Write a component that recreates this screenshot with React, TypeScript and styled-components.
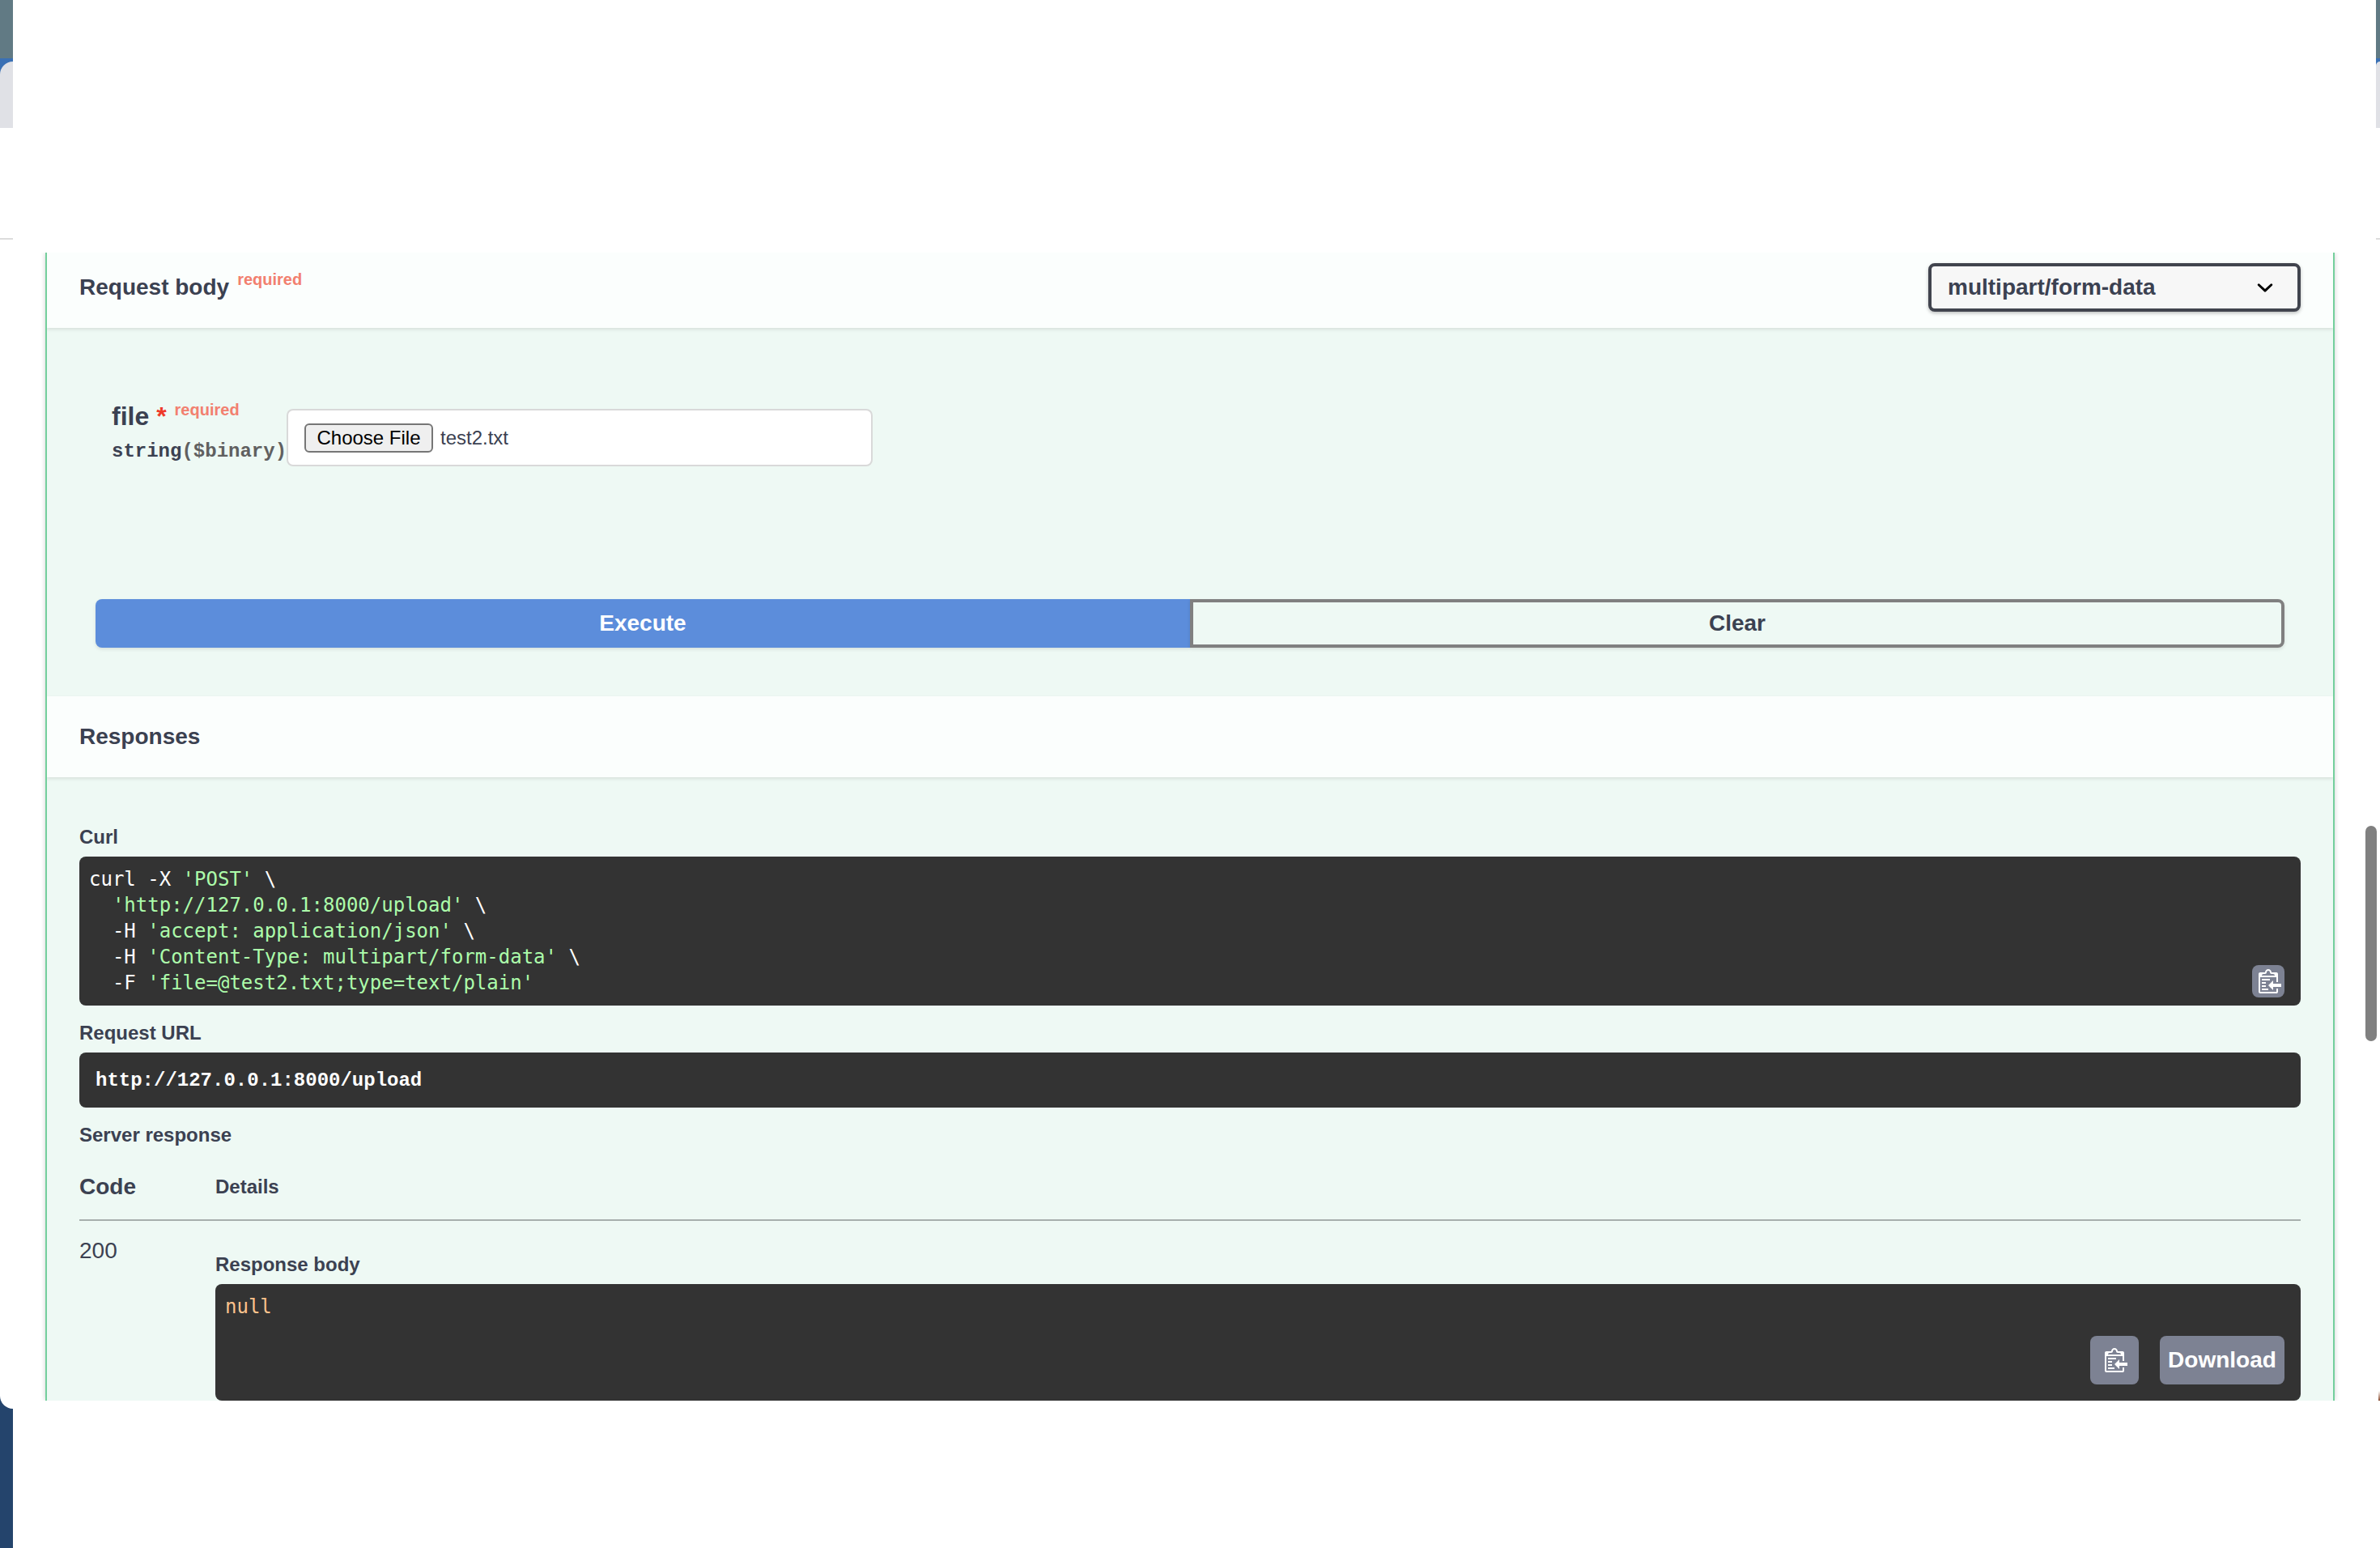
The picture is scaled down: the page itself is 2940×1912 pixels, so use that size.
import React from 'react';
import styled, { createGlobalStyle } from 'styled-components';

const SANS = '"Liberation Sans", Arial, sans-serif';
const CODE = '"DejaVu Sans Mono", monospace';
const MONO = '"Liberation Mono", monospace';
const INK = '#3b4151';
const REQUIRED = '#f2806f';

const CURL_LINES = [
  { prefix: 'curl -X ', value: "'POST'", suffix: ' \\' },
  { prefix: '  ', value: "'http://127.0.0.1:8000/upload'", suffix: ' \\' },
  { prefix: '  -H ', value: "'accept: application/json'", suffix: ' \\' },
  { prefix: '  -H ', value: "'Content-Type: multipart/form-data'", suffix: ' \\' },
  { prefix: '  -F ', value: "'file=@test2.txt;type=text/plain'", suffix: '' }
];

const GlobalStyle = createGlobalStyle`
  html, body {
    margin: 0;
    background: #fff;
    overflow: hidden;
  }

  #root {
    width: 2940px;
    height: 1912px;
  }

  * {
    box-sizing: border-box;
  }
`;

const Page = styled.div`
  position: relative;
  width: 2940px;
  height: 1912px;
  padding: 312px 56px 0;
  background: #fff;
  font-family: ${SANS};
  color: ${INK};
  overflow: hidden;
`;

// slivers of the desktop that show at the window edges
const EdgeTop = styled.div<{ $side: 'left' | 'right'; $width: number }>`
  position: absolute;
  top: 0;
  ${(p) => p.$side}: 0;
  width: ${(p) => p.$width}px;
  height: 72px;
  background: #617a84;
`;

const EdgeCorner = styled.div<{ $side: 'left' | 'right'; $width: number }>`
  position: absolute;
  top: 72px;
  ${(p) => p.$side}: 0;
  width: ${(p) => p.$width}px;
  height: 86px;
  background: #3a70b4;

  &::after {
    content: '';
    position: absolute;
    inset: 4px 0 0;
    background: #e0e1e6;
    border-top-left-radius: 16px;
  }
`;

const EdgeRule = styled.div<{ $side: 'left' | 'right'; $width: number }>`
  position: absolute;
  top: 294px;
  ${(p) => p.$side}: 0;
  width: ${(p) => p.$width}px;
  height: 2px;
  background: #dcdcdc;
`;

const EdgeBottom = styled.div`
  position: absolute;
  top: 1722px;
  left: 0;
  width: 16px;
  height: 190px;
  background: #24446c;

  &::before {
    content: '';
    display: block;
    height: 18px;
    background: #fff;
    border-bottom-left-radius: 16px;
  }
`;

const EdgeSpeck = styled.div`
  position: absolute;
  top: 1718px;
  right: 0;
  width: 2px;
  height: 12px;
  background: linear-gradient(#fff, #8a4a2c);
`;

const ScrollThumb = styled.div`
  position: absolute;
  top: 1020px;
  left: 2922px;
  width: 14px;
  height: 266px;
  border-radius: 7px;
  background: #808080;
`;

const Panel = styled.section`
  width: 2828px;
  height: 1418px;
  overflow: hidden;
  background: #eef9f4;
  border: solid #74cf9d;
  border-width: 0 2px;
  box-shadow: 0 0 6px rgba(0, 0, 0, 0.19);
  clip-path: inset(0 -12px);
`;

const SectionHeader = styled.header<{ $height: number; $lift?: number }>`
  display: flex;
  align-items: center;
  justify-content: space-between;
  height: ${(p) => p.$height}px;
  padding: 0 40px ${(p) => p.$lift || 0}px;
  background: #fbfefd;
  box-shadow: 0 2px 4px rgba(0, 0, 0, 0.1);
`;

const SectionTitle = styled.h4`
  margin: 0;
  font-size: 28px;
  font-weight: 700;
  line-height: 36px;
`;

const RequiredTag = styled.span`
  margin-left: 10px;
  font-size: 20px;
  font-weight: 700;
  line-height: 0;
  color: ${REQUIRED};
  vertical-align: 12px;
`;

const MediaSelect = styled.div`
  display: flex;
  align-items: center;
  justify-content: space-between;
  width: 460px;
  height: 60px;
  padding: 0 20px 0 20px;
  font-size: 28px;
  font-weight: 700;
  background: #f7f7f7;
  border: 4px solid #41444e;
  border-radius: 8px;
  box-shadow: 0 2px 4px rgba(0, 0, 0, 0.25);
`;

const ParamRow = styled.div`
  display: flex;
  align-items: flex-start;
  padding: 91px 0 0 80px;
`;

const ParamInfo = styled.div`
  width: 216px;
  flex: none;
`;

const ParamName = styled.div`
  font-size: 32px;
  font-weight: 700;
  line-height: 36px;
  white-space: nowrap;
`;

const Star = styled.span`
  color: #ee3a2a;
`;

const ParamType = styled.div`
  margin-top: 10px;
  font-family: ${MONO};
  font-size: 24px;
  font-weight: 700;
  line-height: 32px;
  white-space: nowrap;
`;

const ParamFormat = styled.span`
  color: #606060;
`;

const FileField = styled.div`
  display: flex;
  align-items: center;
  gap: 9px;
  width: 724px;
  height: 71px;
  margin-top: 9px;
  padding-left: 20px;
  font-size: 24px;
  background: #fff;
  border: 2px solid #d9d9d9;
  border-radius: 8px;
`;

const FileButton = styled.button`
  width: 159px;
  height: 36px;
  padding: 0;
  font-family: ${SANS};
  font-size: 24px;
  color: #000;
  background: #efefef;
  border: 2px solid #767676;
  border-radius: 6px;
`;

const ExecuteRow = styled.div`
  display: flex;
  margin: 164px 60px 60px;
  height: 60px;
`;

const ActionButton = styled.button<{ $primary?: boolean }>`
  flex: none;
  width: 1352px;
  height: 60px;
  padding: 0;
  font-family: ${SANS};
  font-size: 28px;
  font-weight: 700;
  color: ${(p) => (p.$primary ? '#fff' : INK)};
  background: ${(p) => (p.$primary ? '#5c8ddb' : 'transparent')};
  border: ${(p) => (p.$primary ? 'none' : '4px solid #808080')};
  border-radius: ${(p) => (p.$primary ? '8px 0 0 8px' : '0 8px 8px 0')};
  box-shadow: 0 2px 4px rgba(0, 0, 0, 0.1);
`;

const ResponseArea = styled.div`
  padding: 58px 40px 0;
`;

const BlockLabel = styled.h5<{ $first?: boolean }>`
  margin: ${(p) => (p.$first ? 0 : '18px')} 0 8px;
  font-size: 24px;
  font-weight: 700;
  line-height: 32px;
`;

const DarkBlock = styled.div<{ $height: number }>`
  position: relative;
  height: ${(p) => p.$height}px;
  background: #333;
  border-radius: 8px;
`;

const CodeText = styled.div<{ $tone?: string }>`
  padding: 12px;
  font-family: ${CODE};
  font-size: 24px;
  color: ${(p) => p.$tone || '#fff'};
`;

const CodeLine = styled.div`
  height: 32px;
  line-height: 32px;
  white-space: pre;
`;

const Str = styled.span`
  color: #acfcaa;
`;

const UrlText = styled.div`
  padding: 2px 20px 0;
  font-family: ${MONO};
  font-size: 24px;
  font-weight: 700;
  line-height: 66px;
  color: #fff;
`;

const TableHead = styled.div`
  display: grid;
  grid-template-columns: 168px 1fr;
  align-items: center;
  height: 82px;
  border-bottom: 2px solid #a7afad;
`;

const CodeHeading = styled.div`
  font-size: 28px;
  font-weight: 700;
`;

const DetailsHeading = styled.div`
  font-size: 24px;
  font-weight: 700;
`;

const TableRow = styled.div`
  display: grid;
  grid-template-columns: 168px 1fr;
`;

const StatusCode = styled.div`
  padding-top: 21px;
  font-size: 28px;
  line-height: 32px;
`;

const RowDetails = styled.div`
  padding-top: 38px;
`;

const OverlayActions = styled.div<{ $bottom: number }>`
  position: absolute;
  right: 20px;
  bottom: ${(p) => p.$bottom}px;
  display: flex;
  gap: 26px;
`;

const GreyButton = styled.button<{ $size: number; $wide?: boolean }>`
  display: flex;
  align-items: center;
  justify-content: center;
  width: ${(p) => (p.$wide ? '154px' : `${p.$size}px`)};
  height: ${(p) => p.$size}px;
  padding: 0;
  font-family: ${SANS};
  font-size: 28px;
  font-weight: 700;
  color: #fff;
  background: #7d8293;
  border: none;
  border-radius: 8px;
`;

const ClipboardSvg = styled.svg`
  flex: none;
  margin: 0 0 2px 6px;
  fill: #fff;
`;

function ClipboardIcon () {
  return (
    <ClipboardSvg
      height='32'
      viewBox='0 0 15 16'
      width='30'
    >
      <path
        fillRule='evenodd'
        d='M2 13h4v1H2v-1zm5-6H2v1h5V7zm2 3V8l-3 3 3 3v-2h5v-2H9zM4.5 9H2v1h2.5V9zM2 12h2.5v-1H2v1zm9 1h1v2c-.02.28-.11.52-.3.7-.19.18-.42.28-.7.3H1c-.55 0-1-.45-1-1V4c0-.55.45-1 1-1h3c0-1.11.89-2 2-2 1.11 0 2 .89 2 2h3c.55 0 1 .45 1 1v5h-1V6H1v9h10v-2zM2 5h8c0-.55-.45-1-1-1H8c-.55 0-1-.45-1-1s-.45-1-1-1-1 .45-1 1-.45 1-1 1H3c-.55 0-1 .45-1 1z'
      />
    </ClipboardSvg>
  );
}

function ChevronIcon () {
  return (
    <svg
      fill='#000'
      height='40'
      viewBox='0 0 20 20'
      width='40'
    >
      <path d='M13.418 7.859a.695.695 0 01.978 0 .68.68 0 010 .969l-3.908 3.83a.697.697 0 01-.979 0l-3.908-3.83a.68.68 0 010-.969.695.695 0 01.978 0L10 11l3.418-3.141z' />
    </svg>
  );
}

export default function App () {
  return (
    <Page>
      <GlobalStyle />
      <EdgeTop $side='left' $width={16} />
      <EdgeCorner $side='left' $width={16} />
      <EdgeRule $side='left' $width={16} />
      <EdgeBottom />
      <EdgeTop $side='right' $width={5} />
      <EdgeCorner $side='right' $width={5} />
      <EdgeRule $side='right' $width={5} />
      <EdgeSpeck />
      <ScrollThumb />

      <Panel>
        <SectionHeader $height={93} $lift={7}>
          <SectionTitle>
            Request body<RequiredTag>required</RequiredTag>
          </SectionTitle>
          <MediaSelect>
            multipart/form-data
            <ChevronIcon />
          </MediaSelect>
        </SectionHeader>

        <ParamRow>
          <ParamInfo>
            <ParamName>
              file <Star>*</Star><RequiredTag>required</RequiredTag>
            </ParamName>
            <ParamType>string<ParamFormat>($binary)</ParamFormat></ParamType>
          </ParamInfo>
          <FileField>
            <FileButton>Choose File</FileButton>
            test2.txt
          </FileField>
        </ParamRow>

        <ExecuteRow>
          <ActionButton $primary>Execute</ActionButton>
          <ActionButton>Clear</ActionButton>
        </ExecuteRow>

        <SectionHeader $height={100}>
          <SectionTitle>Responses</SectionTitle>
        </SectionHeader>

        <ResponseArea>
          <BlockLabel $first>Curl</BlockLabel>
          <DarkBlock $height={184}>
            <CodeText>
              {CURL_LINES.map((line) => (
                <CodeLine key={line.value}>
                  {line.prefix}<Str>{line.value}</Str>{line.suffix}
                </CodeLine>
              ))}
            </CodeText>
            <OverlayActions $bottom={10}>
              <GreyButton $size={40}><ClipboardIcon /></GreyButton>
            </OverlayActions>
          </DarkBlock>

          <BlockLabel>Request URL</BlockLabel>
          <DarkBlock $height={68}>
            <UrlText>http://127.0.0.1:8000/upload</UrlText>
          </DarkBlock>

          <BlockLabel>Server response</BlockLabel>
          <TableHead>
            <CodeHeading>Code</CodeHeading>
            <DetailsHeading>Details</DetailsHeading>
          </TableHead>
          <TableRow>
            <StatusCode>200</StatusCode>
            <RowDetails>
              <BlockLabel $first>Response body</BlockLabel>
              <DarkBlock $height={144}>
                <CodeText $tone='#fcc28c'>
                  <CodeLine>null</CodeLine>
                </CodeText>
                <OverlayActions $bottom={20}>
                  <GreyButton $size={60}><ClipboardIcon /></GreyButton>
                  <GreyButton $size={60} $wide>Download</GreyButton>
                </OverlayActions>
              </DarkBlock>
            </RowDetails>
          </TableRow>
        </ResponseArea>
      </Panel>
    </Page>
  );
}
